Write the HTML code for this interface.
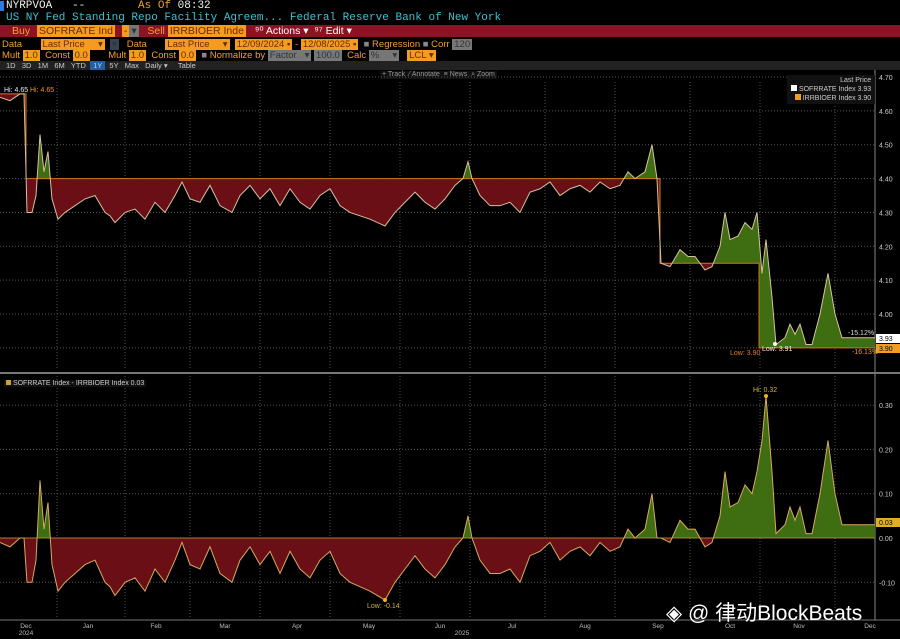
<!DOCTYPE html>
<html><head><meta charset="utf-8"><style>
*{margin:0;padding:0;box-sizing:border-box}
body{width:900px;height:639px;background:#000;overflow:hidden;font-family:"Liberation Sans",sans-serif;font-size:9.5px;color:#ddd;position:relative}
.a{position:absolute;white-space:nowrap}
.mono{font-family:"Liberation Mono",monospace}
.or{color:#f0a030}
.ob{background:#f39c1f;color:#6b2a00;padding:0 2px}
.gb{background:#777;color:#333;padding:0 2px}
</style></head><body>
<div class="a" style="left:0;top:1px;width:4px;height:10px;background:#2c7be5"></div>
<div class="a mono" style="left:6px;top:0;font-size:11px;color:#eee">NYRPVOA &nbsp; -- &nbsp; &nbsp; &nbsp; &nbsp;<span class="or">As Of</span> 08:32</div>
<div class="a mono" style="left:6px;top:12px;font-size:11px;color:#3cc0d0">US NY Fed Standing Repo Facility Agreem...  Federal Reserve Bank of New York</div>
<div class="a" style="left:0;top:25px;width:900px;height:12px;background:#8a1423"></div>
<div class="a" style="left:12px;top:25px;font-size:10.5px;line-height:12px;color:#f0a030">Buy <span class="ob" style="margin-left:4px">SOFRRATE Ind</span> <span class="ob" style="margin-left:4px">-</span><span class="gb">▾</span> &nbsp;&nbsp;Sell <span class="ob">IRRBIOER Inde</span> <span style="color:#fff;margin-left:6px">⁹⁰ Actions ▾ &nbsp;⁹⁷ Edit ▾</span></div>
<div class="a or" style="left:2px;top:40px;line-height:10px">Data &nbsp; &nbsp; &nbsp; <span class="ob">Last Price &nbsp; &nbsp; ▾</span> &nbsp;<span class="gb" style="background:#345">▾</span> &nbsp; Data &nbsp; &nbsp; &nbsp; <span class="ob">Last Price &nbsp; &nbsp; ▾</span> &nbsp;<span class="ob">12/09/2024 ▪</span> - <span class="ob">12/08/2025 ▪</span> &nbsp;<span style="color:#888">■</span> Regression <span style="color:#888">■</span> Corr <span class="gb">120</span></div>
<div class="a or" style="left:2px;top:51px;line-height:10px">Mult <span class="ob">1.0</span> &nbsp;Const <span class="ob">0.0</span> &nbsp; &nbsp; &nbsp; Mult <span class="ob">1.0</span> &nbsp;Const <span class="ob">0.0</span> &nbsp;<span style="color:#888">■</span> Normalize by <span class="gb">Factor &nbsp; ▾</span> <span class="gb">100.0</span> &nbsp;Calc <span class="gb">% &nbsp; &nbsp; ▾</span> &nbsp; <span class="ob">LCL ▾</span></div>
<div class="a" style="left:0;top:61px;width:900px;height:9px;background:#222"></div>
<div class="a" style="left:6px;top:61px;line-height:9px;font-size:7.5px;color:#ccc;word-spacing:0">1D &nbsp; 3D &nbsp; 1M &nbsp; 6M &nbsp; YTD &nbsp;<span style="background:#1f5fa8;padding:0 3px">1Y</span> &nbsp;5Y &nbsp; Max &nbsp; Daily ▾ &nbsp; &nbsp; Table</div>
<div class="a" style="left:380px;top:71px;font-size:7px;color:#999;background:#111;padding:0 2px">+ Track &nbsp;⁄ Annotate &nbsp;≡ News &nbsp;⌕ Zoom</div>
<svg class="a" style="left:0;top:0" width="900" height="639" id="s"></svg>
<div class="a" style="left:787px;top:75px;font-size:7px;color:#ccc;background:#111;padding:1px 4px;line-height:9px;text-align:right">Last Price<br><span style="background:#fff;display:inline-block;width:6px;height:6px"></span> SOFRRATE Index 3.93<br><span style="background:#f39c1f;display:inline-block;width:6px;height:6px"></span> IRRBIOER Index 3.90</div>
<div class="a" style="left:4px;top:380px;font-size:7px;color:#ccc;background:#111;padding:0 2px"><span style="background:#c8a040;display:inline-block;width:5px;height:5px"></span> SOFRRATE Index - IRRBIOER Index 0.03</div>
<div class="a" style="left:666px;top:597px;font-size:21px;color:#fff;font-family:'Liberation Sans','Noto Sans CJK SC',sans-serif">◈ @ 律动BlockBeats</div>
<script>
const S=[[0,-0.01],[10,-0.02],[20,0],[24,0],[27,-0.1],[32,-0.1],[36,-0.05],[40,0.13],[44,0.02],[48,0.08],[52,-0.06],[58,-0.12],[65,-0.1],[75,-0.08],[85,-0.06],[95,-0.05],[105,-0.1],[110,-0.11],[115,-0.13],[125,-0.1],[135,-0.09],[145,-0.12],[155,-0.07],[165,-0.1],[175,-0.05],[182,-0.01],[190,-0.06],[200,-0.07],[210,-0.02],[220,-0.08],[232,-0.1],[240,-0.05],[250,-0.02],[260,-0.06],[270,-0.03],[280,-0.08],[290,-0.03],[300,-0.07],[310,-0.09],[320,-0.05],[330,-0.03],[340,-0.08],[350,-0.1],[360,-0.11],[370,-0.12],[385,-0.14],[395,-0.1],[405,-0.07],[415,-0.04],[425,-0.07],[435,-0.09],[445,-0.06],[455,-0.02],[463,0],[468,0.05],[472,0],[480,-0.05],[490,-0.08],[500,-0.08],[510,-0.07],[520,-0.1],[530,-0.04],[540,-0.03],[550,-0.01],[560,-0.05],[570,-0.03],[580,-0.02],[590,-0.04],[600,-0.01],[610,-0.03],[620,-0.02],[628,0.02],[635,0],[645,0.02],[652,0.1],[657,0],[661,0],[670,-0.01],[680,0.04],[688,0.02],[695,0.02],[705,-0.02],[712,-0.01],[720,0.05],[725,0.15],[730,0.07],[738,0.08],[745,0.12],[752,0.1],[757,0.15],[762,0.22],[766,0.32],[772,0.15],[776,0.01],[785,0.03],[790,0.07],[795,0.04],[800,0.07],[806,0.01],[812,0.01],[820,0.1],[828,0.22],[835,0.1],[842,0.03],[875,0.03]];
const io=x=>x<26?4.65:x<660?4.40:x<759?4.15:3.90;
const ty=v=>77+(4.70-v)*338.6, by=v=>538-v*443;
let h='';
const mx=[0,57,125,190,260,330,400,470,545,615,690,760,835];
const ms=['Dec','Jan','Feb','Mar','Apr','May','Jun','Jul','Aug','Sep','Oct','Nov','Dec'],ml=[26,88,156,225,297,369,440,512,585,658,730,799,870];
mx.slice(1).forEach(x=>{h+=`<line x1="${x}" y1="82" x2="${x}" y2="370" stroke="#555" stroke-dasharray="1,2"/><line x1="${x}" y1="376" x2="${x}" y2="618" stroke="#555" stroke-dasharray="1,2"/>`});
[4.7,4.6,4.5,4.4,4.3,4.2,4.1,4.0,3.9].forEach(v=>{const y=ty(v);h+=`<line x1="0" y1="${y}" x2="875" y2="${y}" stroke="#555" stroke-dasharray="1,2"/><text x="879" y="${y+3}" fill="#ccc" font-size="7">${v.toFixed(2)}</text>`});
[0.3,0.2,0.1,0,-0.1].forEach(v=>{const y=by(v);h+=`<line x1="0" y1="${y}" x2="875" y2="${y}" stroke="#555" stroke-dasharray="1,2"/><text x="879" y="${y+3}" fill="#ccc" font-size="7">${v.toFixed(2)}</text>`});
h+=`<line x1="875" y1="70" x2="875" y2="620" stroke="#888"/><line x1="0" y1="373" x2="900" y2="373" stroke="#777" stroke-width="2"/><line x1="0" y1="620" x2="900" y2="620" stroke="#777"/>`;
let ptsT=[];
S.forEach(([x,d])=>{ptsT.push([x,ty(io(x)+d)])});
const ioPts=[[0,4.65],[26,4.65],[26,4.40],[660,4.40],[660,4.15],[759,4.15],[759,3.90],[875,3.90]];
const iop=ioPts.map(p=>p[0]+','+ty(p[1])).join(' ');
const sp=ptsT.map(p=>p.join(',')).join(' ');
const ioRev=ioPts.slice().reverse().map(p=>p[0]+','+ty(p[1])).join(' ');
h+=`<defs><clipPath id="ab"><polygon points="0,70 ${iop} 875,70"/></clipPath><clipPath id="be"><polygon points="0,372 ${iop} 875,372"/></clipPath>
<clipPath id="ab2"><rect x="0" y="376" width="875" height="${by(0)-376}"/></clipPath><clipPath id="be2"><rect x="0" y="${by(0)}" width="875" height="100"/></clipPath></defs>`;
const poly=sp+' '+ioRev;
h+=`<polygon points="${poly}" fill="#3f6e12" clip-path="url(#ab)"/><polygon points="${poly}" fill="#6a0f16" clip-path="url(#be)"/>`;
h+=`<polyline points="${iop}" fill="none" stroke="#d07a1a" stroke-width="1"/><polyline points="${sp}" fill="none" stroke="#d8c0a0" stroke-width="1"/>`;
const bp=S.map(([x,d])=>x+','+by(d)).join(' ');
const bpoly=`0,${by(0)} ${bp} 875,${by(0)}`;
h+=`<polygon points="${bpoly}" fill="#3f6e12" clip-path="url(#ab2)"/><polygon points="${bpoly}" fill="#6a0f16" clip-path="url(#be2)"/>`;
h+=`<polyline points="${bp}" fill="none" stroke="#d8a860" stroke-width="1"/><line x1="0" y1="${by(0)}" x2="875" y2="${by(0)}" stroke="#c8a040" stroke-width="0.8"/>`;
h+=`<text x="4" y="92" fill="#eee" font-size="7">Hi: 4.65</text><text x="30" y="92" fill="#f39c1f" font-size="7">Hi: 4.65</text>`;
h+=`<text x="730" y="355" fill="#e08020" font-size="7">Low: 3.90</text><text x="762" y="351" fill="#eee" font-size="7">Low: 3.91</text><circle cx="775" cy="344" r="2" fill="#fff"/>`;
h+=`<text x="848" y="335" fill="#ddd" font-size="7">-15.12%</text><text x="852" y="354" fill="#f39c1f" font-size="7">-16.13%</text>`;
h+=`<rect x="876" y="334" width="24" height="9" fill="#fff"/><text x="879" y="341" fill="#000" font-size="7">3.93</text><rect x="876" y="344" width="24" height="9" fill="#f39c1f"/><text x="879" y="351" fill="#000" font-size="7">3.90</text>`;
h+=`<rect x="876" y="518" width="24" height="9" fill="#e0b020"/><text x="879" y="525" fill="#000" font-size="7">0.03</text>`;
h+=`<text x="753" y="392" fill="#d0b040" font-size="7">Hi: 0.32</text><circle cx="766" cy="396" r="2" fill="#f0b020"/><text x="367" y="608" fill="#d0b040" font-size="7">Low: -0.14</text><circle cx="385" cy="600" r="2" fill="#f0b020"/>`;
ms.forEach((m,i)=>{h+=`<text x="${ml[i]}" y="628" fill="#bbb" font-size="6.5" text-anchor="middle">${m}</text>`});
h+=`<text x="26" y="635" fill="#bbb" font-size="6.5" text-anchor="middle">2024</text><text x="462" y="635" fill="#bbb" font-size="6.5" text-anchor="middle">2025</text>`;
document.getElementById('s').innerHTML=h;
</script>
</body></html>
